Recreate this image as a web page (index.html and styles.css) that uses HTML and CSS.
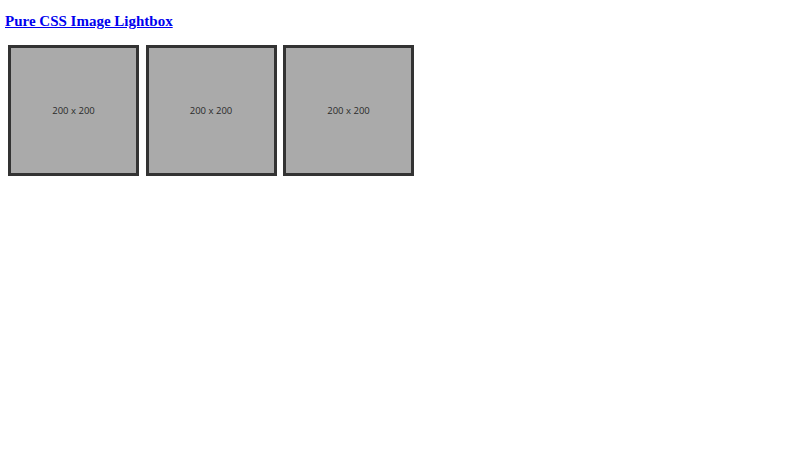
FILE: index.html
```html
<!DOCTYPE html>
<html>
<head>
<meta charset="utf-8">
<link rel="stylesheet" href="styles.css">
</head>
<body>
<h1 class="title"><a href="#">Pure CSS Image Lightbox</a></h1>
<div class="gallery">
  <a class="thumb" href="#"><span class="ph">200 x 200</span></a>
  <a class="thumb" href="#"><span class="ph">200 x 200</span></a>
  <a class="thumb" href="#"><span class="ph">200 x 200</span></a>
</div>
</body>
</html>
```
FILE: styles.css
```css
body {
  margin: 0;
  font-family: "Liberation Serif", serif;
  background: #fff;
}
.title {
  margin: 0;
  padding: 12px 5px 0;
  font-size: 15px;
  font-weight: bold;
  line-height: 18px;
}
.title a {
  color: #0000ee;
  text-decoration: underline;
}
.gallery {
  display: flex;
  gap: 6.5px;
  padding: 15px 8px 0;
}
.thumb {
  width: 125px;
  height: 125px;
  border: 3px solid #333;
  background: #aaa;
  display: flex;
  align-items: center;
  justify-content: center;
  text-decoration: none;
}
.ph {
  font-family: "Open Sans", sans-serif;
  font-size: 9.5px;
  color: #2a2a2a;
}
```
